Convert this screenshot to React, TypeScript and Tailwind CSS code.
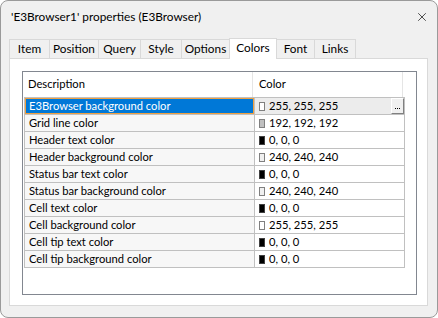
import { X } from 'lucide-react';

interface ColorRow {
  label: string;
  rgb: [number, number, number];
}

const rows: ColorRow[] = [
  { label: 'E3Browser background color', rgb: [255, 255, 255] },
  { label: 'Grid line color', rgb: [192, 192, 192] },
  { label: 'Header text color', rgb: [0, 0, 0] },
  { label: 'Header background color', rgb: [240, 240, 240] },
  { label: 'Status bar text color', rgb: [0, 0, 0] },
  { label: 'Status bar background color', rgb: [240, 240, 240] },
  { label: 'Cell text color', rgb: [0, 0, 0] },
  { label: 'Cell background color', rgb: [255, 255, 255] },
  { label: 'Cell tip text color', rgb: [0, 0, 0] },
  { label: 'Cell tip background color', rgb: [0, 0, 0] },
];

const tabs = [
  { name: 'Item', w: 'w-[41px]' },
  { name: 'Position', w: 'w-[50px]' },
  { name: 'Query', w: 'w-[43px]' },
  { name: 'Style', w: 'w-[42px]' },
  { name: 'Options', w: 'w-[49px]' },
  { name: 'Colors', w: 'w-[48px]' },
  { name: 'Font', w: 'w-[39px]' },
  { name: 'Links', w: 'w-[42px]' },
];

function Swatch({ rgb }: { rgb: [number, number, number] }) {
  const dark = rgb[0] < 100;
  return (
    <span
      className={`inline-block w-[6px] h-[9px] border ${dark ? 'border-[#404040]' : 'border-[#808080]'}`}
      style={{ backgroundColor: `rgb(${rgb.join(',')})` }}
    />
  );
}

export default function App() {
  return (
    <div
      className="w-[438px] h-[318px] bg-[#f0f0f0] border border-[#9a9a9a] rounded-[8px] flex flex-col overflow-hidden text-[12px] text-black"
      style={{ fontFamily: 'Lato, "Noto Sans", sans-serif' }}
    >
      {/* Title bar */}
      <div className="h-[31px] flex items-center justify-between pl-[10px] pr-[8px] shrink-0">
        <span className="leading-none text-[11.8px]">'E3Browser1' properties (E3Browser)</span>
        <X className="w-[14px] h-[14px] text-[#1a1a1a]" strokeWidth={1.3} />
      </div>

      {/* Tabs */}
      <div className="flex items-end h-[27px] pl-[8px] mt-[-1px] shrink-0 whitespace-nowrap text-[11.8px]">
        {tabs.map((t) =>
          t.name === 'Colors' ? (
            <div
              key={t.name}
              className={`${t.w} h-[21px] mb-[-1px] relative z-10 bg-white border border-b-0 border-[#d9d9d9] flex items-center justify-center pb-[3px] -ml-[1px]`}
            >
              {t.name}
            </div>
          ) : (
            <div
              key={t.name}
              className={`${t.w} h-[19px] bg-[#f0f0f0] border border-b-0 border-[#d9d9d9] flex items-center justify-center -ml-[1px] first:ml-0 overflow-hidden`}
            >
              {t.name}
            </div>
          )
        )}
      </div>

      {/* Panel */}
      <div className="flex-1 ml-[8px] mr-[9px] mb-[11px] bg-white border border-[#d9d9d9] pl-[12px] pt-[12px]">
        <div className="w-[395px] h-[224px] border border-[#828790] bg-white flex flex-col text-[11.2px]">
          {/* Header */}
          <div className="h-[25px] flex shrink-0">
            <div className="w-[230px] border-r border-[#e5e5e5] pl-[5px] flex items-center">Description</div>
            <div className="w-[150px] border-r border-[#e5e5e5] pl-[6px] flex items-center">Color</div>
          </div>
          {/* Rows */}
          <div className="ml-[1px] w-[381px] border-l border-t border-[#c0c0c0]">
            {rows.map((r, i) => (
              <div key={r.label} className="flex h-[17px] border-b border-[#c0c0c0]">
                {i === 0 ? (
                  <div className="w-[229px] border border-[#f0a040] bg-[#0078d7] text-white pl-[3px] flex items-center leading-none">
                    {r.label}
                  </div>
                ) : (
                  <div className="w-[229px] bg-[#f7f7f7] pl-[4px] flex items-center leading-none">{r.label}</div>
                )}
                <div
                  className={`w-[151px] border-l border-r border-[#c0c0c0] flex items-center pl-[4px] gap-[4px] leading-none ${
                    i === 0 ? 'bg-[#ececec]' : 'bg-white'
                  }`}
                >
                  <Swatch rgb={r.rgb} />
                  <span className="flex-1">{r.rgb.join(', ')}</span>
                  {i === 0 && (
                    <span className="w-[13px] h-[16px] bg-[#f0f0f0] border border-t-white border-l-white border-r-[#808080] border-b-[#808080] flex items-end justify-center gap-[1px] pb-[4px]">
                      <span className="w-[1px] h-[1px] bg-black" />
                      <span className="w-[1px] h-[1px] bg-black" />
                      <span className="w-[1px] h-[1px] bg-black" />
                    </span>
                  )}
                </div>
              </div>
            ))}
          </div>
        </div>
      </div>
    </div>
  );
}
